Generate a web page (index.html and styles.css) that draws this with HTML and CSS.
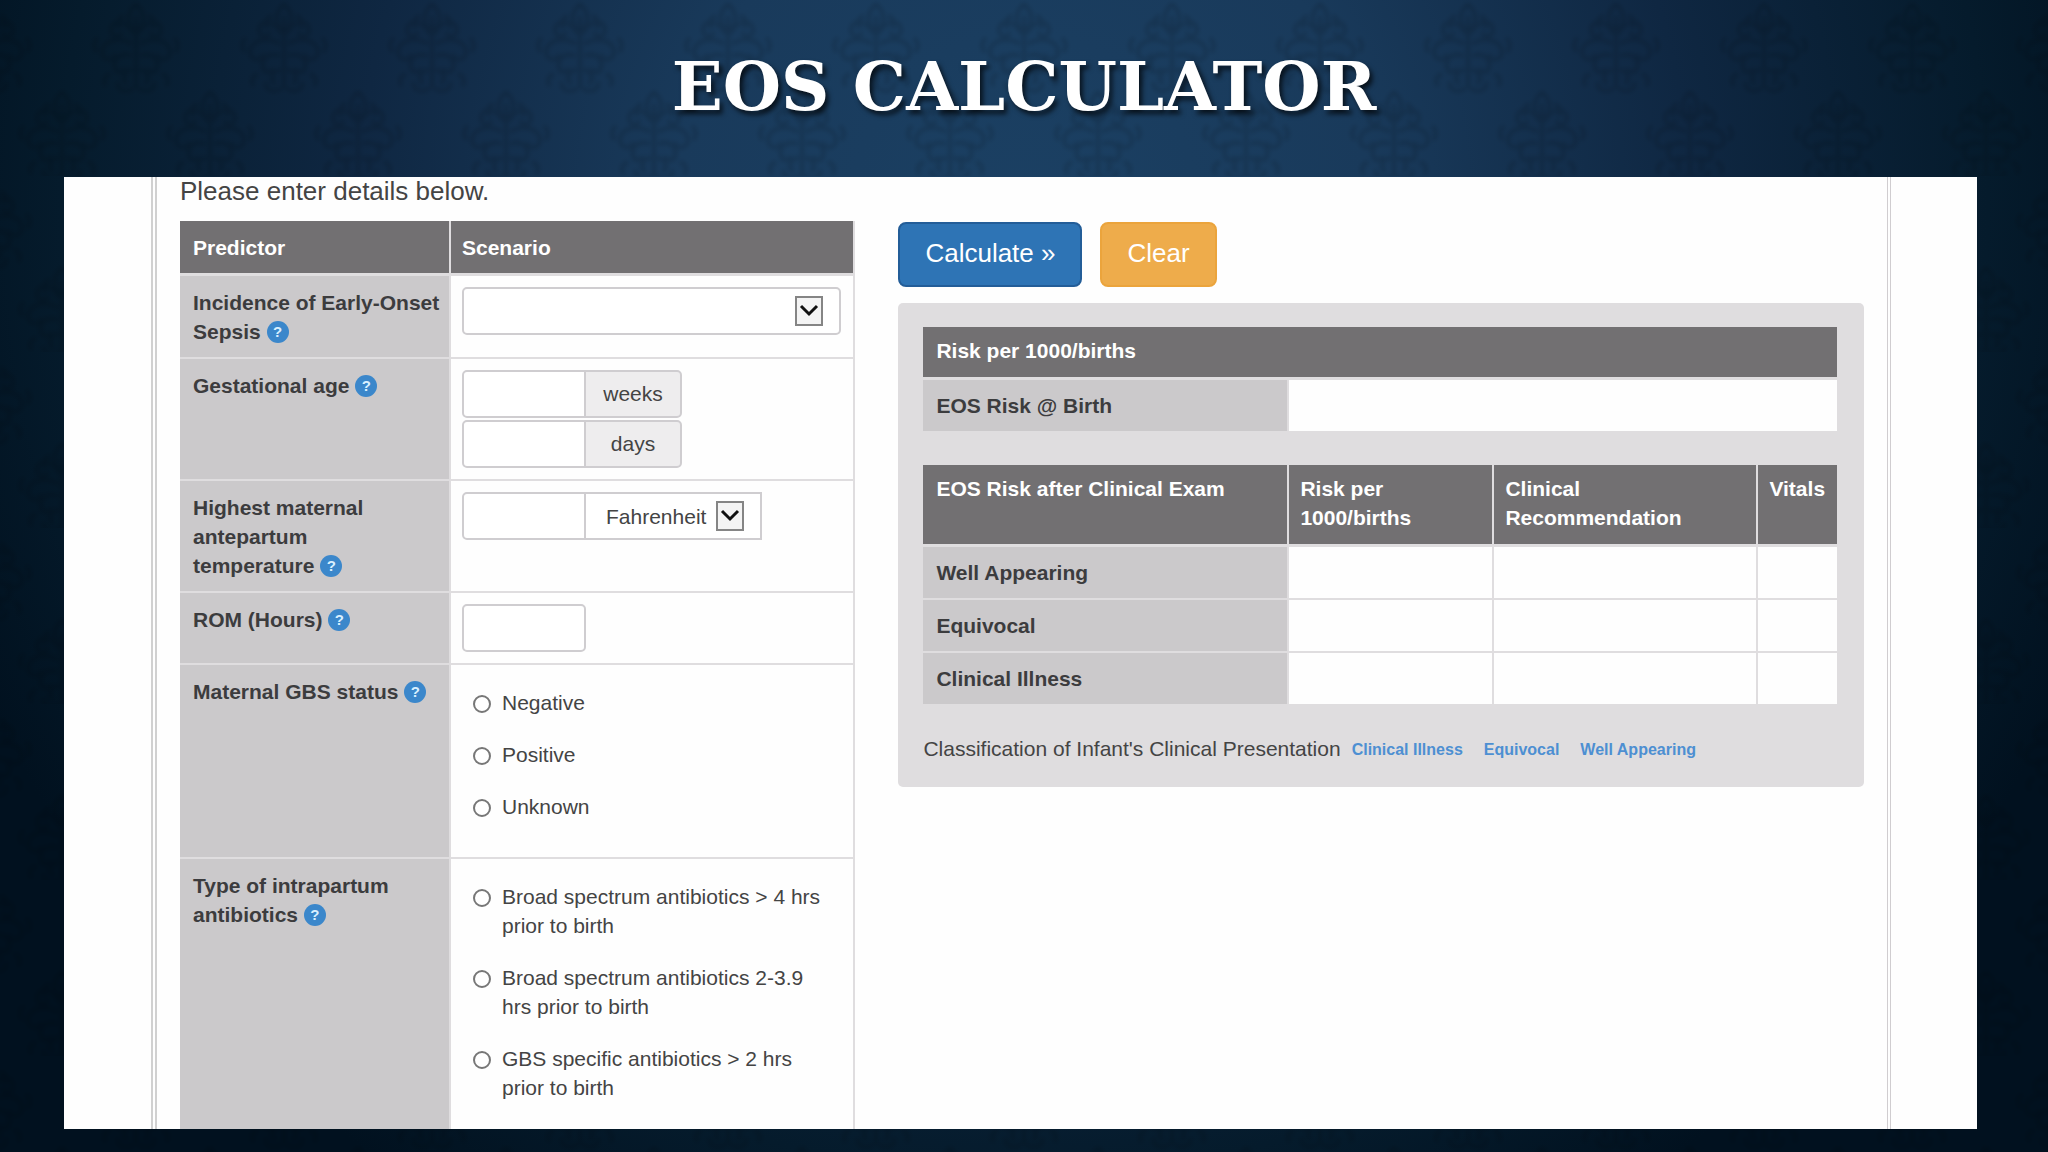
FILE: index.html
```html
<!DOCTYPE html>
<html lang="en">
<head>
<meta charset="utf-8">
<meta name="viewport" content="width=device-width, initial-scale=1">
<title>EOS Calculator</title>
<link rel="stylesheet" href="styles.css">
</head>
<body class="slide">
<svg class="sprite" aria-hidden="true">
  <symbol id="chevron" viewBox="0 0 24 26">
    <path d="M4 8l8 8 8-8" fill="none" stroke="#111" stroke-width="3"/>
  </symbol>
</svg>
<header class="slide-header">
  <h1 class="slide-title">EOS CALCULATOR</h1>
</header>
<main class="sheet">
  <form class="page" onsubmit="return false">
    <section class="inputs">
      <p class="intro">Please enter details below.</p>
      <table class="grid predictors">
        <thead>
          <tr><th class="col-name" scope="col">Predictor</th><th scope="col">Scenario</th></tr>
        </thead>
        <tbody>
          <tr>
            <th scope="row"><label for="incidence">Incidence of <span class="keep">Early-Onset</span></label> <span class="keep"><label for="incidence">Sepsis</label> <button type="button" class="help" aria-label="Help: incidence">?</button></span></th>
            <td>
              <span class="select select-wide">
                <select id="incidence"><option></option></select>
                <svg class="arrow" aria-hidden="true"><use href="#chevron"/></svg>
              </span>
            </td>
          </tr>
          <tr>
            <th scope="row">Gestational age <button type="button" class="help" aria-label="Help: gestational age">?</button></th>
            <td>
              <div class="stack">
                <div class="group"><input class="field" id="weeks" type="text"><label class="addon" for="weeks">weeks</label></div>
                <div class="group"><input class="field" id="days" type="text"><label class="addon" for="days">days</label></div>
              </div>
            </td>
          </tr>
          <tr>
            <th scope="row"><label for="temp">Highest maternal antepartum</label> <span class="keep"><label for="temp">temperature</label> <button type="button" class="help" aria-label="Help: temperature">?</button></span></th>
            <td>
              <div class="group">
                <input class="field" id="temp" type="text">
                <span class="select select-unit">
                  <select aria-label="Temperature unit"><option>Fahrenheit</option><option>Celsius</option></select>
                  <svg class="arrow" aria-hidden="true"><use href="#chevron"/></svg>
                </span>
              </div>
            </td>
          </tr>
          <tr>
            <th scope="row"><label for="rom">ROM (Hours)</label> <button type="button" class="help" aria-label="Help: ROM">?</button></th>
            <td><div class="group"><input class="field" id="rom" type="text"></div></td>
          </tr>
          <tr>
            <th scope="row">Maternal GBS status <button type="button" class="help" aria-label="Help: GBS status">?</button></th>
            <td>
              <div class="choices">
                <label class="choice"><input type="radio" name="gbs">Negative</label>
                <label class="choice"><input type="radio" name="gbs">Positive</label>
                <label class="choice"><input type="radio" name="gbs">Unknown</label>
              </div>
            </td>
          </tr>
          <tr>
            <th scope="row">Type of intrapartum <span class="keep">antibiotics <button type="button" class="help" aria-label="Help: antibiotics">?</button></span></th>
            <td>
              <div class="choices">
                <label class="choice"><input type="radio" name="abx">Broad spectrum antibiotics &gt; 4 hrs prior to birth</label>
                <label class="choice"><input type="radio" name="abx">Broad spectrum antibiotics 2-3.9 hrs prior to birth</label>
                <label class="choice"><input type="radio" name="abx">GBS specific antibiotics &gt; 2 hrs prior to birth</label>
              </div>
            </td>
          </tr>
        </tbody>
      </table>
    </section>
    <section class="results">
      <div class="actions">
        <button type="button" class="btn btn-primary">Calculate »</button>
        <button type="reset" class="btn btn-warning">Clear</button>
      </div>
      <div class="panel">
        <table class="grid risk">
          <colgroup><col class="col-exam"><col></colgroup>
          <thead><tr><th colspan="2" scope="col">Risk per 1000/births</th></tr></thead>
          <tbody><tr><th scope="row">EOS Risk @ Birth</th><td></td></tr></tbody>
        </table>
        <table class="grid risk">
          <colgroup><col class="col-exam"><col class="col-risk"><col class="col-rec"><col></colgroup>
          <thead>
            <tr>
              <th scope="col">EOS Risk after Clinical Exam</th>
              <th scope="col">Risk per 1000/births</th>
              <th scope="col">Clinical Recommendation</th>
              <th scope="col">Vitals</th>
            </tr>
          </thead>
          <tbody>
            <tr><th scope="row">Well Appearing</th><td></td><td></td><td></td></tr>
            <tr><th scope="row">Equivocal</th><td></td><td></td><td></td></tr>
            <tr><th scope="row">Clinical Illness</th><td></td><td></td><td></td></tr>
          </tbody>
        </table>
        <div class="legend">
          <span>Classification of Infant's Clinical Presentation</span>
          <nav class="legend-links">
            <a href="#illness">Clinical Illness</a>
            <a href="#equivocal">Equivocal</a>
            <a href="#well">Well Appearing</a>
          </nav>
        </div>
      </div>
    </section>
  </form>
</main>
</body>
</html>
```

FILE: styles.css
```css
* { box-sizing: border-box; }

.slide {
  margin: 0;
  height: 100vh;
  display: flex;
  flex-direction: column;
  overflow: hidden;
  font: 21px/29px "Liberation Sans", Arial, sans-serif;
  color: #444;
  background:
    url("data:image/svg+xml,%3Csvg xmlns='http://www.w3.org/2000/svg' xmlns:xlink='http://www.w3.org/1999/xlink' width='148' height='176'%3E%3Cdefs%3E%3Cfilter id='b'%3E%3CfeGaussianBlur stdDeviation='2'/%3E%3C/filter%3E%3Cg id='h'%3E%3Cpath d='M0-40c-9 8-10 18-2 26M-3-10c-6-14-20-16-22-5c-1 8 9 10 11 3M-4 0c-12-8-30-4-30 8c0 9 12 10 13 2M-4 12c-10-4-20 2-17 12c2 6 9 5 9 0M-3 26c-8 0-12 8-6 14M-12-28c-6 2-8 8-4 12M-38-6c-5 4-5 10-1 14'/%3E%3Cpath d='M-2 44c-8 6-18 2-16-6M-26 30c-6 2-8 8-4 12'/%3E%3C/g%3E%3Cg id='m'%3E%3Cuse xlink:href='%23h'/%3E%3Cuse xlink:href='%23h' transform='scale(-1 1)'/%3E%3Cpath d='M0-28v72'/%3E%3C/g%3E%3C/defs%3E%3Cg fill='none' stroke='%23000c1c' stroke-opacity='.13' stroke-width='4' filter='url(%23b)'%3E%3Cuse xlink:href='%23m' x='74' y='44'/%3E%3Cuse xlink:href='%23m' x='0' y='132'/%3E%3Cuse xlink:href='%23m' x='148' y='132'/%3E%3C/g%3E%3C/svg%3E") center top,
    radial-gradient(ellipse 56% 100% at 50% 18%, #1b4063 0%, #193a5b 30%, #0f2742 58%, #051b2c 84%, #01111f 100%);
}

.sprite { display: none; }

.slide-header {
  flex: none;
  height: 177px;
  display: flex;
  justify-content: center;
  align-items: center;
  padding-bottom: 3px;
}

.slide-title {
  margin: 0;
  font: bold 67px/80px "DejaVu Serif", serif;
  color: #fff;
  text-shadow: 3px 4px 5px rgba(0, 0, 0, .7);
}

.sheet {
  flex: 1;
  min-height: 0;
  margin: 0 71px 23px 64px;
  padding: 0 86px 0 87px;
  background: #fefefe;
  overflow: hidden;
}

.page {
  height: 100%;
  display: grid;
  grid-template-columns: 675fr 965fr;
  gap: 43px;
  padding: 0 23px 0 23px;
  border-left: 6px double #d0d0d0;
  border-right: 4px double #d0cdd0;
}

.intro {
  margin: 0;
  padding-bottom: 15px;
  font-size: 26px;
  line-height: 29px;
}

.grid {
  width: 100%;
  border-collapse: collapse;
  table-layout: fixed;
}

.grid th,
.grid td {
  padding: 11px 8px 11px 11px;
  border: 2px solid #dfdddf;
  text-align: left;
  vertical-align: top;
}

.grid td { padding-right: 12px; }
.grid th { font-weight: bold; }
.grid thead th { background: #727072; color: #fff; border-top-color: #727072; border-bottom-width: 3px; }
.grid tbody th { background: #cbc9cb; color: #3c3c3e; border-left-color: #cbc9cb; }
.grid td { background: #fefefe; }
.grid thead th:first-child { border-left-color: #727072; }
.predictors thead th { padding-top: 10px; }
.predictors tbody th { padding-top: 12px; }

.col-name { width: 269px; }
.col-exam { width: 364px; }
.col-risk { width: 205px; }
.col-rec { width: 264px; }

.keep { white-space: nowrap; }

.help {
  width: 22px;
  height: 22px;
  padding: 0;
  border: 0;
  border-radius: 50%;
  background: #3b87cb;
  color: #d9f0ff;
  font: bold 15px/20px "Liberation Sans", Arial, sans-serif;
  text-align: center;
  vertical-align: 2px;
}

.stack { display: grid; gap: 2px; }
.group { display: flex; }

.field,
.addon,
.select select {
  height: 48px;
  border: 2px solid #cfcdd0;
  border-radius: 5px;
  background: #fff;
  font: inherit;
  color: inherit;
}

.field { width: 124px; }
.group .field:not(:only-child) { border-radius: 5px 0 0 5px; }

.addon {
  width: 98px;
  margin-left: -2px;
  border-radius: 0 5px 5px 0;
  background: #eeedee;
  line-height: 44px;
  text-align: center;
}

.select { position: relative; display: block; }
.select select { width: 100%; appearance: none; padding: 0 20px; }
.select-unit { width: 178px; margin-left: -2px; }
.select-unit select { border-radius: 0; }

.arrow {
  position: absolute;
  top: 9px;
  right: 18px;
  width: 28px;
  height: 30px;
  border: 2px solid #858585;
  background: #f4f4f4;
  pointer-events: none;
}

.choices {
  display: grid;
  gap: 23px;
  padding: 12px 20px 25px 11px;
}

.choice { display: flex; gap: 11px; }

.choice input {
  flex: none;
  appearance: none;
  width: 18px;
  height: 18px;
  margin: 7px 0 0;
  border: 2px solid #777;
  border-radius: 50%;
  background: #fff;
}

.results { padding-top: 45px; }

.actions { display: flex; gap: 18px; }

.btn {
  height: 65px;
  padding: 0 25px 4px;
  border: 2px solid;
  border-radius: 8px;
  font: 26px/30px "Liberation Sans", Arial, sans-serif;
  color: #fff;
}

.btn-primary { background: #2e74b5; border-color: #235d98; }
.btn-warning { background: #eeac4b; border-color: #eba43c; }

.panel {
  display: grid;
  gap: 32px;
  margin-top: 16px;
  padding: 24px 25px 23px;
  border-radius: 5px;
  background: #dfdddf;
}

.risk thead th { padding-top: 7px; padding-bottom: 12px; }
.risk tr > :last-child { border-right-color: #dfdddf; }

.legend { display: flex; gap: 11px; margin-top: -4px; }
.legend-links { display: flex; gap: 21px; padding-top: 1px; }

.legend-links a {
  font-size: 16px;
  font-weight: bold;
  color: #4d8fd2;
  text-decoration: none;
}
```
